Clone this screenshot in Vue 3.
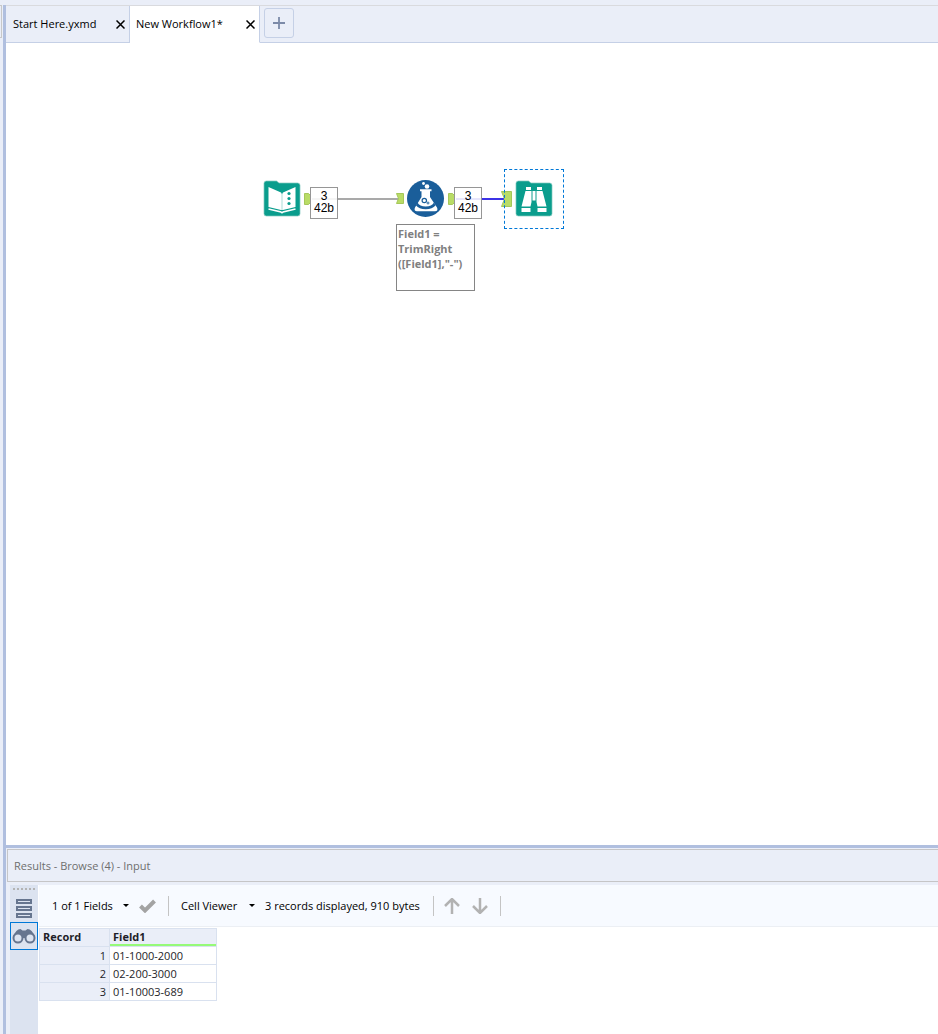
<script setup>
import { ref } from 'vue'

const tabs = ref([
  { name: 'Start Here.yxmd', active: false },
  { name: 'New Workflow1*', active: true },
])
const rows = ['01-1000-2000', '02-200-3000', '01-10003-689']
</script>

<template>
  <div class="shell">
    <div class="edge"><span class="edge-tab"></span></div>
    <div class="main">
      <nav class="tabs">
        <div v-for="t in tabs" :key="t.name" class="tab" :class="{ active: t.active }">
          <button class="tab-name">{{ t.name }}</button>
          <button class="close" :aria-label="'Close ' + t.name">
            <svg width="9" height="9" viewBox="0 0 9 9"><path d="M.5.5l8 8M8.5.5l-8 8" stroke="#000" stroke-width="1.5" /></svg>
          </button>
        </div>
        <div class="tab-rest">
          <button class="add" aria-label="New workflow">
            <svg width="14" height="14" viewBox="0 0 14 14"><path d="M7 1v12M1 7h12" stroke="#7c8aa8" stroke-width="1.8" /></svg>
          </button>
        </div>
      </nav>

      <main class="canvas">
        <svg class="wires" width="600" height="260" viewBox="0 0 600 260">
          <path d="M306 156H393" stroke="#a9a9a9" stroke-width="2" />
          <path d="M450 156H498" stroke="#3c32e6" stroke-width="2" />
          <g fill="#b9dc66" stroke="#a5c75a" stroke-width="1">
            <path d="M298.500 150.500h4l2 2v7l-2 2h-4z" />
            <path d="M390.500 150.500h7v10h-7l2-5z" />
            <path d="M442.500 150.500h4l2 2v7l-2 2h-4z" />
            <path d="M495.500 148.500h10v15h-10l3-7.500z" />
          </g>
        </svg>

        <svg class="tool text-input" width="38" height="38" viewBox="0 0 38 38">
          <path d="M3.500 1h10l2.500 2h18.500q2.500 0 2.500 2.500v28q0 2.500-2.500 2.500h-31Q1 36 1 33.500v-30Q1 1 3.500 1z" fill="#0a9d8d" stroke="#81c8bf" stroke-width=".7" />
          <path d="M5.500 7L18 12.500V30L5.500 27z M20 12.500L32.500 7V27L20 30z" fill="#fff" />
          <path d="M5.500 29L18 32q1 1.500 2 0l12.500-3" fill="none" stroke="#fff" stroke-width="1.500" />
          <path d="M18 12.500l1 1.500 1-1.500V30h-2z" fill="#d5eeeb" />
          <g fill="#0a9d8d"><circle cx="26" cy="13.500" r="1.600" /><circle cx="26" cy="18.500" r="1.600" /><circle cx="26" cy="23.500" r="1.600" /></g>
        </svg>
        <div class="count count-a">3<br />42b</div>

        <svg class="tool formula" width="38" height="38" viewBox="0 0 38 38">
          <circle cx="18.500" cy="18.500" r="18.500" fill="#1a5e9a" />
          <path d="M13 9.300h11.500v2H23V17l7 10.500q1.500 3.700-2 3.700H10q-3.500 0-2-3.700L14.500 17v-5.700H13z" fill="#fff" />
          <path d="M10.500 22.500q2 4 8.200 4t8.300-4l1.500 3q-3 3.700-9.800 3.700T9 25.500z" fill="#1a5e9a" />
          <circle cx="17.300" cy="20.500" r="2.200" fill="#fff" stroke="#1a5e9a" stroke-width="1.200" />
          <circle cx="21" cy="23" r="1" fill="#fff" stroke="#1a5e9a" stroke-width=".9" />
          <circle cx="20" cy="6.500" r="2.300" fill="#fff" /><circle cx="16.500" cy="3.500" r="1.400" fill="#fff" />
        </svg>
        <div class="count count-b">3<br />42b</div>
        <div class="note">Field1 =<br />TrimRight<br />([Field1],"-")</div>

        <div class="selection">
          <svg width="38" height="38" viewBox="0 0 38 38">
            <path d="M3.500 1h10l2.500 2h18.500q2.500 0 2.500 2.500v28q0 2.500-2.500 2.500h-31Q1 36 1 33.500v-30Q1 1 3.500 1z" fill="#0a9d8d" stroke="#81c8bf" stroke-width=".7" />
            <g fill="#fff">
              <path d="M11 7h5v3h-5zM22 7h5v3h-5zM17.500 11h3v9.500h-3z" />
              <path d="M10.500 11h6v11l-1 4.500h-9zM21.500 11h6l4 15.500h-9l-1-4.500zM6.500 28h9v4h-9zM22.500 28h9v4h-9z" />
            </g>
          </svg>
        </div>
      </main>

      <section class="results">
        <header class="title">Results - Browse (4) - Input</header>
        <div class="body">
          <aside class="side">
            <span class="grip"><i v-for="n in 6" :key="n"></i></span>
            <button class="side-btn" aria-label="Messages">
              <svg width="18" height="20" viewBox="0 0 18 20"><g fill="#dce3f0" stroke="#66758f" stroke-width="2"><rect x="2" y="2" width="14" height="3" /><rect x="2" y="9" width="14" height="3" /><rect x="2" y="16" width="14" height="3" /></g></svg>
            </button>
            <button class="side-btn chosen" aria-label="Browse">
              <svg width="24" height="16" viewBox="0 0 24 16">
                <path d="M1 9Q4 1 8.500 1l2 1.500h3l2-1.500Q20 1 23 9l-4-3-5 4h-4L5 6z" fill="#66758f" />
                <circle cx="6" cy="10" r="4.500" fill="#dce3f0" stroke="#66758f" stroke-width="2" />
                <circle cx="18" cy="10" r="4.500" fill="#dce3f0" stroke="#66758f" stroke-width="2" />
                <path d="M10 6h4v4h-4z" fill="#66758f" />
              </svg>
            </button>
          </aside>
          <div class="data">
            <div class="toolbar">
              <button class="drop fields">1 of 1 Fields <i class="caret"></i></button>
              <button class="icon" aria-label="Apply">
                <svg width="17" height="14" viewBox="0 0 17 14"><path d="M1.500 7L6 11.500 15.500 2" fill="none" stroke="#a3a3a3" stroke-width="4" /></svg>
              </button>
              <span class="sep"></span>
              <button class="drop viewer">Cell Viewer <i class="caret"></i></button>
              <span class="info">3 records displayed, 910 bytes</span>
              <span class="sep"></span>
              <button class="icon arrow" aria-label="Previous">
                <svg width="16" height="16" viewBox="0 0 16 16"><path d="M8 16V2M1 8l7-7 7 7" fill="none" stroke="#b2b2b2" stroke-width="2.500" /></svg>
              </button>
              <button class="icon arrow" aria-label="Next">
                <svg width="16" height="16" viewBox="0 0 16 16"><path d="M8 0v14M1 8l7 7 7-7" fill="none" stroke="#b2b2b2" stroke-width="2.500" /></svg>
              </button>
              <span class="sep"></span>
            </div>
            <table>
              <thead><tr><th class="rec">Record</th><th class="field">Field1</th></tr></thead>
              <tbody>
                <tr v-for="(r, i) in rows" :key="r"><td class="num">{{ i + 1 }}</td><td>{{ r }}</td></tr>
              </tbody>
            </table>
          </div>
        </div>
      </section>
    </div>
  </div>
</template>

<style>
body { margin: 0; background: #fff; }
</style>

<style scoped>
* { box-sizing: border-box; }
.shell { display: flex; min-height: 100vh; padding-top: 5px; background: #eaeef8; font: 11px/16px "Open Sans", "Noto Sans", sans-serif; color: #000; }
button { font: inherit; color: inherit; background: none; border: 0; padding: 0; white-space: nowrap; }
svg { display: block; }
.edge { width: 6px; border-right: 3px solid #b0bfdf; }
.edge-tab { display: block; width: 2px; height: 33px; border: 1px solid #c8c8c8; border-left: 0; }
.main { flex: 1; min-width: 0; display: flex; flex-direction: column; }
.tabs { display: flex; height: 38px; border-top: 1px solid #d9dade; }
.tab { display: flex; align-items: center; justify-content: space-between; width: 124px; padding: 0 4px 0 7px; border-right: 1px solid #c5d0e6; border-bottom: 1px solid #c5d0e6; }
.tab.active { width: 130px; padding-left: 6px; background: #fff; border-bottom-color: #fff; }
.tab-rest { flex: 1; padding: 2px 4px; border-bottom: 1px solid #c5d0e6; }
.add { display: flex; align-items: center; justify-content: center; width: 30px; height: 30px; border: 1px solid #c5d0e6; border-radius: 3px; }
.canvas { position: relative; flex: 1; background: #fff; }
.wires { position: absolute; left: 0; top: 0; }
.tool { position: absolute; top: 137px; }
.text-input { left: 257px; }
.formula { left: 401px; }
.count { position: absolute; top: 144px; width: 28px; height: 32px; padding-top: 2px; border: 1px solid #969696; background: rgba(255, 255, 255, .88); font-family: "Liberation Sans", sans-serif; font-size: 12px; line-height: 12px; text-align: center; }
.count-a { left: 304px; }
.count-b { left: 448px; }
.note { position: absolute; left: 390px; top: 181px; width: 79px; height: 67px; padding: 1px; border: 1px solid #858585; background: #fff; color: #808080; font-weight: 700; font-size: 11px; line-height: 15px; }
.selection { position: absolute; left: 498px; top: 126px; width: 60px; height: 60px; padding: 10px; border: 1px dashed #0078d7; }
.results { border-top: 3px solid #b0bfdf; }
.title { height: 33px; margin: 1px 0 3px 1px; padding: 8px 6px; border: 1px solid #c5c5c7; border-right: 0; color: #6e6e6e; }
.body { display: flex; min-height: 149px; padding-left: 4px; background: #fff; box-shadow: inset 4px 0 #eaeef8; }
.side { width: 28px; background: #dce3f0; }
.grip { display: flex; justify-content: center; gap: 2px; padding: 3px 0; }
.grip i { width: 2px; height: 2px; background: #b3b3b3; }
.side-btn { display: flex; align-items: center; justify-content: center; width: 28px; height: 29px; }
.side-btn.chosen { height: 28px; border: 1px solid #0078d7; }
.data { flex: 1; min-width: 0; padding-left: 1px; }
.toolbar { display: flex; align-items: center; height: 42px; padding-left: 13px; background: #f7faff; border-bottom: 1px solid #eceff4; }
.drop { display: flex; align-items: center; justify-content: space-between; }
.fields { width: 77px; margin-right: 10px; }
.viewer { width: 74px; margin-right: 10px; }
.caret { border: 3px solid transparent; border-top-color: #000; border-bottom: 0; }
.icon { margin-right: 12px; }
.sep { width: 1px; height: 20px; margin-right: 12px; background: #c4c4c4; }
.info { width: 156px; margin-right: 12px; white-space: nowrap; }
.sep + .arrow { margin-left: -2px; }
table { border-collapse: collapse; table-layout: fixed; width: 178px; margin-top: 1px; line-height: 15px; color: #1e1e28; }
th, td { height: 18px; padding: 1px 3px; border: 1px solid #d9e1ef; text-align: left; }
th, .num { background: #eaeef8; }
th { padding: 0 3px 2px; }
.rec { width: 70px; }
.field { box-shadow: inset 0 -2px #96fa78; }
.num { text-align: right; }
</style>
